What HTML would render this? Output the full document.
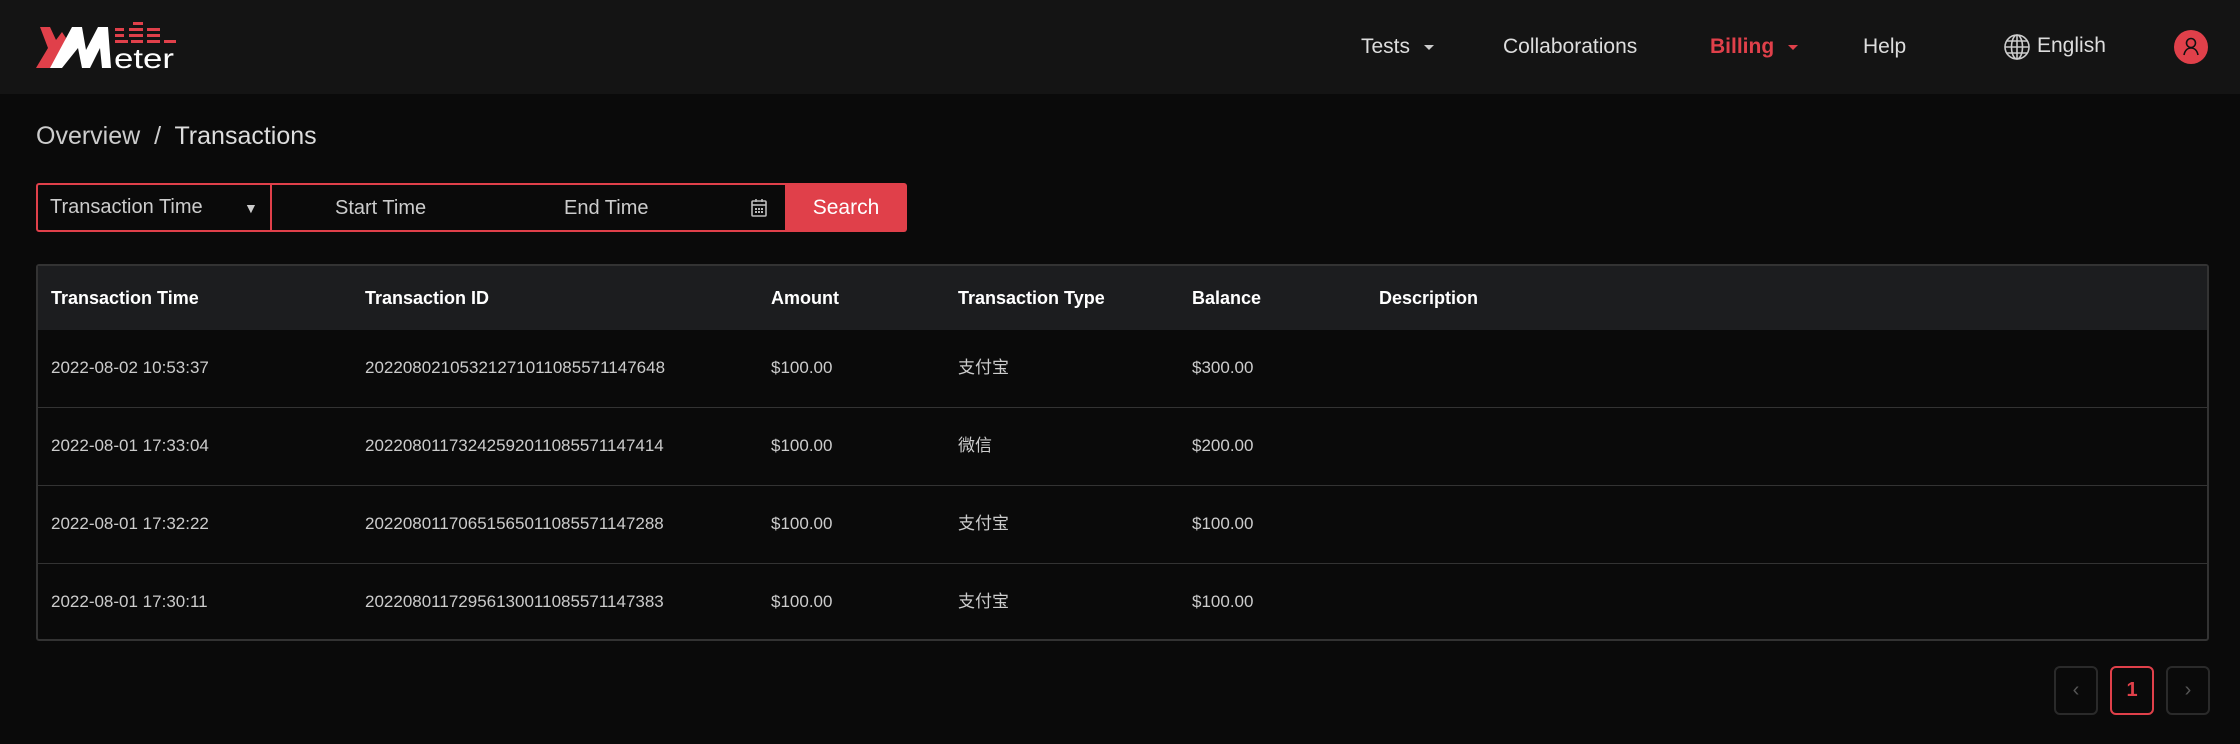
<!DOCTYPE html>
<html><head><meta charset="utf-8"><style>
*{margin:0;padding:0;box-sizing:border-box}
body{width:2240px;height:744px;background:#0a0a0a;font-family:"Liberation Sans","Noto Sans CJK SC",sans-serif;color:#ddd;position:relative;overflow:hidden}
.hdr{position:absolute;left:0;top:0;width:2240px;height:94px;background:#141414}
.nav{position:absolute;top:34px;font-size:21px;color:#ddd;line-height:26px}
.caret{display:inline-block;width:0;height:0;border-left:5px solid transparent;border-right:5px solid transparent;border-top:5px solid #ccc;vertical-align:middle;margin-left:14px}
.bc{position:absolute;left:36px;top:122px;font-size:25px;color:#ccc}
.filter{position:absolute;left:36px;top:183px;width:869px;height:49px;border:2px solid #e0404a;border-radius:3px}
.ft{position:absolute;font-size:20px;color:#ccc;top:11px}
.search{position:absolute;left:747px;top:-2px;width:122px;height:49px;background:#e0404a;color:#fff;font-size:21px;text-align:center;line-height:49px;border-radius:0 3px 3px 0}
.tbl{position:absolute;left:36px;top:264px;width:2173px;height:377px;border:2px solid #333;border-radius:3px;overflow:hidden}
.row{position:absolute;left:0;width:100%;height:78px;border-bottom:1px solid #333}
.row span{position:absolute;top:28px;font-size:17px;color:#ccc;line-height:20px}
.th{background:#1c1d1f;height:64px;border:none}
.th span{top:22px;font-weight:bold;color:#fff;font-size:18px}
.pg{position:absolute;top:666px;width:44px;height:49px;border:2px solid #2a2a2a;border-radius:6px;text-align:center;line-height:45px;color:#555;font-size:20px}
</style></head><body>
<div class="hdr">
<svg style="position:absolute;left:36px;top:20px" width="145" height="50" viewBox="0 0 145 50">
<g fill="#e0404a">
<rect x="97" y="2" width="10" height="3"/>
<rect x="79" y="8" width="9" height="3"/><rect x="93" y="8" width="14" height="3"/><rect x="111" y="8" width="13" height="3"/>
<rect x="79" y="14" width="9" height="3"/><rect x="93" y="14" width="14" height="3"/><rect x="111" y="14" width="13" height="3"/>
<rect x="79" y="20" width="13" height="3"/><rect x="95" y="20" width="12" height="3"/><rect x="111" y="20" width="13" height="3"/><rect x="128" y="20" width="12" height="3"/>
<polygon points="0,48 12,28 4,7 14,7 20,20 26,12 30,18 17,48"/></g>
<polygon fill="#fff" points="14,48 36,7 46,7 50,30 62,7 72,7 75,48 66,48 64,28 54,48 46,48 42,28 26,48"/>
<text x="78" y="48" fill="#fff" font-size="28" font-family="Liberation Sans" textLength="60" lengthAdjust="spacingAndGlyphs">eter</text>
</svg>
<div class="nav" style="left:1361px">Tests<span class="caret"></span></div>
<div class="nav" style="left:1503px">Collaborations</div>
<div class="nav" style="left:1710px;color:#e0404a;font-weight:bold">Billing<span class="caret" style="border-top-color:#e0404a"></span></div>
<div class="nav" style="left:1863px">Help</div>
<svg style="position:absolute;left:2003px;top:33px" width="28" height="28" viewBox="0 0 28 28" fill="none" stroke="#ccc" stroke-width="1.6"><circle cx="14" cy="14" r="12"/><ellipse cx="14" cy="14" rx="5.5" ry="12"/><line x1="2" y1="14" x2="26" y2="14"/><line x1="4" y1="8" x2="24" y2="8"/><line x1="4" y1="20" x2="24" y2="20"/><line x1="14" y1="2" x2="14" y2="26"/></svg>
<div class="nav" style="left:2037px;top:33px">English</div>
<div style="position:absolute;left:2174px;top:30px;width:34px;height:34px;border-radius:50%;background:#e0404a"><svg width="34" height="34" viewBox="0 0 34 34" fill="none" stroke="#111" stroke-width="1.6"><circle cx="17" cy="13" r="4.5"/><path d="M10 25c1-5 4-7 7-7s6 2 7 7"/></svg></div>
</div>
<div class="bc">Overview &nbsp;/&nbsp; <span style="color:#ddd">Transactions</span></div>
<div class="filter">
<div class="ft" style="left:12px">Transaction Time</div>
<div class="ft" style="left:206px;font-size:14px;top:15px">▼</div>
<div style="position:absolute;left:232px;top:0;width:2px;height:45px;background:#e0404a"></div>
<div class="ft" style="left:297px;top:12px">Start Time</div>
<div class="ft" style="left:526px;top:12px">End Time</div>
<svg style="position:absolute;left:712px;top:13px" width="18" height="20" viewBox="0 0 18 20" fill="none" stroke="#bbb" stroke-width="1.6"><rect x="2" y="3" width="14" height="15" rx="1"/><line x1="2" y1="7" x2="16" y2="7"/><line x1="6" y1="1" x2="6" y2="4"/><line x1="12" y1="1" x2="12" y2="4"/><g stroke-width="2"><line x1="5" y1="11" x2="7" y2="11"/><line x1="8" y1="11" x2="10" y2="11"/><line x1="11" y1="11" x2="13" y2="11"/><line x1="5" y1="14" x2="7" y2="14"/><line x1="8" y1="14" x2="10" y2="14"/><line x1="11" y1="14" x2="13" y2="14"/></g></svg>
<div class="search">Search</div>
</div>
<div class="tbl">
<div class="row th" style="top:0"><span style="left:13px">Transaction Time</span><span style="left:327px">Transaction ID</span><span style="left:733px">Amount</span><span style="left:920px">Transaction Type</span><span style="left:1154px">Balance</span><span style="left:1341px">Description</span></div>
<div class="row" style="top:64px"><span style="left:13px">2022-08-02 10:53:37</span><span style="left:327px">20220802105321271011085571147648</span><span style="left:733px">$100.00</span><span style="left:920px">支付宝</span><span style="left:1154px">$300.00</span></div>
<div class="row" style="top:142px"><span style="left:13px">2022-08-01 17:33:04</span><span style="left:327px">20220801173242592011085571147414</span><span style="left:733px">$100.00</span><span style="left:920px">微信</span><span style="left:1154px">$200.00</span></div>
<div class="row" style="top:220px"><span style="left:13px">2022-08-01 17:32:22</span><span style="left:327px">20220801170651565011085571147288</span><span style="left:733px">$100.00</span><span style="left:920px">支付宝</span><span style="left:1154px">$100.00</span></div>
<div class="row" style="top:298px;border:none"><span style="left:13px">2022-08-01 17:30:11</span><span style="left:327px">20220801172956130011085571147383</span><span style="left:733px">$100.00</span><span style="left:920px">支付宝</span><span style="left:1154px">$100.00</span></div>
</div>
<div class="pg" style="left:2054px">‹</div>
<div class="pg" style="left:2110px;border-color:#e0404a;color:#e0404a;font-weight:bold">1</div>
<div class="pg" style="left:2166px">›</div>
</body></html>
